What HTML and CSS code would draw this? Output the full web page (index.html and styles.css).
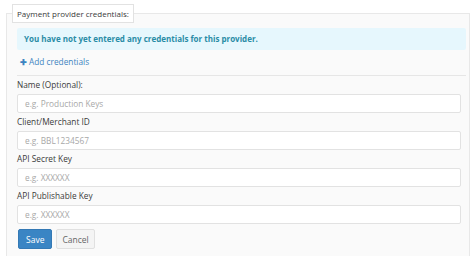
FILE: index.html
```html
<!DOCTYPE html>
<html lang="en">
<head>
    <meta charset="UTF-8">
    <title>Payment provider credentials</title>
    <link rel="stylesheet" href="styles.css">
</head>
<body>

    <fieldset class="panel">
        <legend>Payment provider credentials:</legend>

        <div class="alert">You have not yet entered any credentials for this provider.</div>

        <a class="add-link" href="#"><span class="plus">&#10010;</span>Add credentials</a>

        <form class="cred-form">
            <div class="field">
                <label for="name">Name (Optional):</label>
                <input type="text" id="name" placeholder="e.g. Production Keys">
            </div>
            <div class="field">
                <label for="merchant">Client/Merchant ID</label>
                <input type="text" id="merchant" placeholder="e.g. BBL1234567">
            </div>
            <div class="field">
                <label for="secret">API Secret Key</label>
                <input type="text" id="secret" placeholder="e.g. XXXXXX">
            </div>
            <div class="field">
                <label for="publishable">API Publishable Key</label>
                <input type="text" id="publishable" placeholder="e.g. XXXXXX">
            </div>
            <div class="actions">
                <button type="button" class="btn btn-primary">Save</button>
                <button type="button" class="btn btn-default">Cancel</button>
            </div>
        </form>
    </fieldset>

</body>
</html>
```

FILE: styles.css
```css
* {
    box-sizing: border-box;
    margin: 0;
    padding: 0;
}

body {
    font-family: 'Open Sans', 'Noto Sans', sans-serif;
    font-size: 8.3px;
    color: #333;
    background: #fff;
    padding: 4px 4px 0 6px;
}

.panel {
    border: 1px solid #e8e8e8;
    background: #fafafa;
    padding: 0 3px 8px 10px;
    min-height: 260px;
}

.panel legend {
    margin-left: -5px;
    padding: 3px 4px;
    background: #fff;
    border: 1px solid #e2e2e2;
    color: #3a3a3a;
    font-size: 8px;
    line-height: 11px;
}

.alert {
    margin-top: 5px;
    background: #e6f7fd;
    color: #2a8ca6;
    font-weight: bold;
    font-size: 8px;
    padding: 5px 7px;
    line-height: 12px;
    border-radius: 2px;
}

.add-link {
    display: block;
    color: #3d84c1;
    text-decoration: none;
    padding: 6px 3px 7px;
    line-height: 12px;
    border-bottom: 1px solid #e6e6e6;
}

.plus {
    font-size: 8px;
    font-weight: bold;
    margin-right: 2px;
}

.cred-form {
    padding-right: 5px;
}

.field label {
    display: block;
    color: #3a3a3a;
    line-height: 12px;
    margin: 3px 0;
}

.field input {
    display: block;
    width: 100%;
    height: 19px;
    border: 1px solid #e2e2e2;
    border-radius: 2px;
    background: #fff;
    padding: 0 7px;
    font-family: inherit;
    font-size: 8.3px;
    color: #333;
    outline: none;
}

.field input::placeholder {
    color: #a8a8a8;
}

.actions {
    display: flex;
    gap: 4px;
    margin-top: 5px;
    padding-left: 1px;
}

.btn {
    font-family: inherit;
    font-size: 8.5px;
    height: 20px;
    padding: 0 7px;
    border-radius: 2px;
    cursor: pointer;
}

.btn-primary {
    background: #3a85c4;
    border: 1px solid #3479b5;
    color: #fff;
}

.btn-default {
    background: #f4f4f4;
    border: 1px solid #e0e0e0;
    color: #666;
    padding: 0 5px;
}
```
